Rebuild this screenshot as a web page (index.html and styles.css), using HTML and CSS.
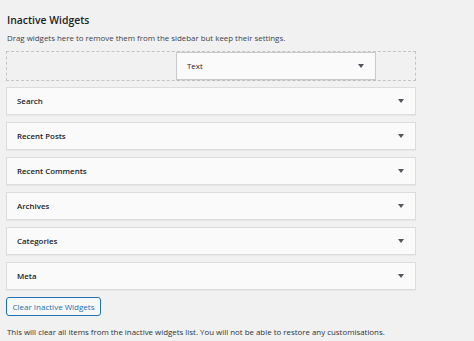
FILE: index.html
```html
<!DOCTYPE html>
<html lang="en">
<head>
    <meta charset="UTF-8">
    <meta name="viewport" content="width=device-width, initial-scale=1.0">
    <title>Inactive Widgets</title>
    <link rel="stylesheet" href="styles.css">
</head>
<body>
    <div class="sidebar">
        <h2 class="title">Inactive Widgets</h2>
        <p class="desc">Drag widgets here to remove them from the sidebar but keep their settings.</p>

        <div class="drop">
            <div class="widget dragging">
                <span class="name">Text</span>
                <span class="arrow"></span>
            </div>
        </div>

        <div class="widget"><span class="name">Search</span><span class="arrow"></span></div>
        <div class="widget"><span class="name">Recent Posts</span><span class="arrow"></span></div>
        <div class="widget"><span class="name">Recent Comments</span><span class="arrow"></span></div>
        <div class="widget"><span class="name">Archives</span><span class="arrow"></span></div>
        <div class="widget"><span class="name">Categories</span><span class="arrow"></span></div>
        <div class="widget"><span class="name">Meta</span><span class="arrow"></span></div>

        <button class="clear">Clear Inactive Widgets</button>
        <p class="note">This will clear all items from the inactive widgets list. You will not be able to restore any customisations.</p>
    </div>
</body>
</html>
```

FILE: styles.css
```css
html,
body {
    margin: 0;
    height: 100%;
}
body {
    background: #f1f1f1;
    font-family: "Open Sans", "Noto Sans", sans-serif;
    color: #1d2327;
}
.sidebar {
    width: 410px;
    padding: 12px 0 0 6px;
}
.title {
    margin: 0 0 0 1px;
    font-size: 10.4px;
    font-weight: 600;
    line-height: 17px;
}
.desc {
    margin: 3px 0 6px 1px;
    font-size: 7.9px;
    line-height: 13px;
    color: #3c434a;
}
.drop {
    display: flex;
    height: 28px;
    padding-left: 169px;
    border: 1px dashed #c3c4c7;
    margin-bottom: 6px;
}
.widget {
    display: flex;
    align-items: center;
    justify-content: space-between;
    box-sizing: border-box;
    height: 28px;
    padding: 0 11px 0 10px;
    margin-bottom: 7px;
    background: #fafafa;
    border: 1px solid #dcdcde;
    box-shadow: 0 1px 1px rgba(0, 0, 0, 0.04);
}
.widget.dragging {
    width: 200px;
    margin-bottom: 0;
    border-color: #c9c9cb;
    padding-right: 11px;
}
.name {
    font-size: 7.9px;
    font-weight: 600;
    color: #1d2327;
}
.dragging .name {
    font-weight: 400;
}
.arrow {
    width: 0;
    height: 0;
    border-left: 3px solid transparent;
    border-right: 3px solid transparent;
    border-top: 4px solid #50575e;
}
.clear {
    display: block;
    height: 19px;
    width: 95px;
    padding: 0;
    margin-top: 2px;
    font-family: inherit;
    font-size: 8px;
    color: #2271b1;
    background: #f6f7f7;
    border: 1px solid #2271b1;
    border-radius: 3px;
}
.note {
    margin: 10px 0 0 1px;
    font-size: 7.9px;
    line-height: 13px;
    color: #2c3338;
    white-space: nowrap;
}
```
